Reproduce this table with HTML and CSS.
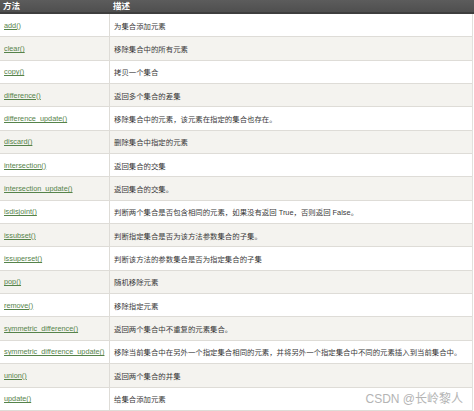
FILE: index.html
```html
<!DOCTYPE html>
<html lang="zh">
<head>
<meta charset="utf-8">
<title>集合方法</title>
<link rel="stylesheet" href="styles.css">
</head>
<body>
<div class="page">
  <div class="table">
    <div class="head">
      <div class="th">方法</div>
      <div class="th th-desc">描述</div>
    </div>
    <div class="row"><div class="c1"><a href="#">add()</a></div><div class="c2">为集合添加元素</div></div>
    <div class="row"><div class="c1"><a href="#">clear()</a></div><div class="c2">移除集合中的所有元素</div></div>
    <div class="row"><div class="c1"><a href="#">copy()</a></div><div class="c2">拷贝一个集合</div></div>
    <div class="row"><div class="c1"><a href="#">difference()</a></div><div class="c2">返回多个集合的差集</div></div>
    <div class="row"><div class="c1"><a href="#">difference_update()</a></div><div class="c2">移除集合中的元素，该元素在指定的集合也存在。</div></div>
    <div class="row"><div class="c1"><a href="#">discard()</a></div><div class="c2">删除集合中指定的元素</div></div>
    <div class="row"><div class="c1"><a href="#">intersection()</a></div><div class="c2">返回集合的交集</div></div>
    <div class="row"><div class="c1"><a href="#">intersection_update()</a></div><div class="c2">返回集合的交集。</div></div>
    <div class="row"><div class="c1"><a href="#">isdisjoint()</a></div><div class="c2">判断两个集合是否包含相同的元素，如果没有返回 True，否则返回 False。</div></div>
    <div class="row"><div class="c1"><a href="#">issubset()</a></div><div class="c2">判断指定集合是否为该方法参数集合的子集。</div></div>
    <div class="row"><div class="c1"><a href="#">issuperset()</a></div><div class="c2">判断该方法的参数集合是否为指定集合的子集</div></div>
    <div class="row"><div class="c1"><a href="#">pop()</a></div><div class="c2">随机移除元素</div></div>
    <div class="row"><div class="c1"><a href="#">remove()</a></div><div class="c2">移除指定元素</div></div>
    <div class="row"><div class="c1"><a href="#">symmetric_difference()</a></div><div class="c2">返回两个集合中不重复的元素集合。</div></div>
    <div class="row"><div class="c1"><a href="#">symmetric_difference_update()</a></div><div class="c2">移除当前集合中在另外一个指定集合相同的元素，并将另外一个指定集合中不同的元素插入到当前集合中。</div></div>
    <div class="row"><div class="c1"><a href="#">union()</a></div><div class="c2">返回两个集合的并集</div></div>
    <div class="row"><div class="c1"><a href="#">update()</a></div><div class="c2">给集合添加元素</div></div>
  </div>
  <div class="watermark">CSDN @长岭黎人</div>
</div>
</body>
</html>
```
FILE: styles.css
```css
html, body {
  margin: 0;
  padding: 0;
  background: #fff;
}
.page {
  position: relative;
  width: 474px;
  height: 411px;
  overflow: hidden;
  font-family: "Liberation Sans", "Noto Sans CJK SC", sans-serif;
}
.table {
  width: 473px;
  border-right: 1px solid #e2e0dc;
  box-sizing: border-box;
}
.head {
  display: grid;
  grid-template-columns: 110px 1fr;
  height: 14px;
  box-sizing: border-box;
  background: linear-gradient(#5c5c5c, #4f4f4f);
  border-bottom: 2px solid #3e3e3e;
  width: 474px;
}
.th {
  color: #fff;
  font-weight: bold;
  font-size: 8.5px;
  line-height: 12px;
  padding-left: 3px;
}
.th-desc {
  padding-left: 3px;
}
.row {
  display: grid;
  grid-template-columns: 110px 1fr;
  height: 23.35px;
  box-sizing: border-box;
  border-bottom: 1px solid #dedcd7;
  background: #fff;
}
.row:nth-child(odd) {
  background: #f4f3ef;
}
.c1, .c2 {
  display: flex;
  align-items: center;
  white-space: nowrap;
}
.c1 {
  border-right: 1px solid #dedcd7;
  padding-left: 4px;
  font-size: 7.3px;
}
.c1 a {
  color: #55834a;
  text-decoration: underline;
}
.c2 {
  padding-left: 4px;
  font-size: 7.4px;
  color: #3a3a3a;
}
.watermark {
  position: absolute;
  right: 11px;
  bottom: 5px;
  font-size: 12px;
  color: #b4b4b4;
  font-family: "Liberation Sans", "Noto Sans CJK SC", sans-serif;
}
```
